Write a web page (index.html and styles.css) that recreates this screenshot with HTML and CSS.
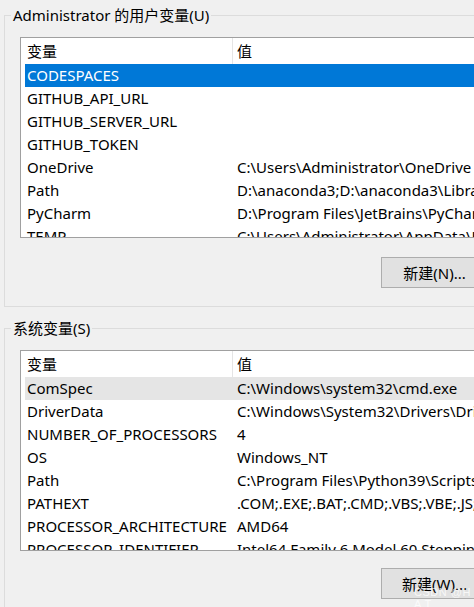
FILE: index.html
```html
<!DOCTYPE html>
<html lang="zh-CN">
<head>
    <meta charset="UTF-8">
    <meta name="viewport" content="width=device-width, initial-scale=1.0">
    <title>环境变量</title>
    <link rel="stylesheet" href="styles.css">
</head>
<body>
    <fieldset class="group" id="user_vars">
        <legend>Administrator 的用户变量(U)</legend>
        <div class="list">
            <div class="list_head">
                <div class="col_name">变量</div>
                <div class="col_value">值</div>
            </div>
            <div class="row selected"><div class="col_name">CODESPACES</div><div class="col_value"></div></div>
            <div class="row"><div class="col_name">GITHUB_API_URL</div><div class="col_value"></div></div>
            <div class="row"><div class="col_name">GITHUB_SERVER_URL</div><div class="col_value"></div></div>
            <div class="row"><div class="col_name">GITHUB_TOKEN</div><div class="col_value"></div></div>
            <div class="row"><div class="col_name">OneDrive</div><div class="col_value">C:\Users\Administrator\OneDrive</div></div>
            <div class="row"><div class="col_name">Path</div><div class="col_value">D:\anaconda3;D:\anaconda3\Library\mingw-w64\bin</div></div>
            <div class="row"><div class="col_name">PyCharm</div><div class="col_value">D:\Program Files\JetBrains\PyCharm 2021.3\bin;</div></div>
            <div class="row"><div class="col_name">TEMP</div><div class="col_value">C:\Users\Administrator\AppData\Local\Temp</div></div>
        </div>
        <div class="buttons">
            <button type="button">新建(N)...</button>
        </div>
    </fieldset>

    <fieldset class="group" id="system_vars">
        <legend>系统变量(S)</legend>
        <div class="list">
            <div class="list_head">
                <div class="col_name">变量</div>
                <div class="col_value">值</div>
            </div>
            <div class="row inactive"><div class="col_name">ComSpec</div><div class="col_value">C:\Windows\system32\cmd.exe</div></div>
            <div class="row"><div class="col_name">DriverData</div><div class="col_value">C:\Windows\System32\Drivers\DriverData</div></div>
            <div class="row"><div class="col_name">NUMBER_OF_PROCESSORS</div><div class="col_value">4</div></div>
            <div class="row"><div class="col_name">OS</div><div class="col_value">Windows_NT</div></div>
            <div class="row"><div class="col_name">Path</div><div class="col_value">C:\Program Files\Python39\Scripts\;C:\Program Files\Python39\</div></div>
            <div class="row"><div class="col_name">PATHEXT</div><div class="col_value">.COM;.EXE;.BAT;.CMD;.VBS;.VBE;.JS;.JSE;.WSF;.WSH;.MSC</div></div>
            <div class="row"><div class="col_name">PROCESSOR_ARCHITECTURE</div><div class="col_value">AMD64</div></div>
            <div class="row"><div class="col_name">PROCESSOR_IDENTIFIER</div><div class="col_value">Intel64 Family 6 Model 60 Stepping 3, GenuineIntel</div></div>
        </div>
        <div class="buttons">
            <button type="button">新建(W)...</button>
        </div>
    </fieldset>

    <div class="watermark">CSDN @H A T</div>
</body>
</html>
```

FILE: styles.css
```css
html, body {
    margin: 0;
    height: 100%;
    overflow: hidden;
}
body {
    background-color: #f0f0f0;
    color: #000;
    font-family: "Noto Sans", "Noto Sans CJK SC", sans-serif;
    font-size: 15px;
    position: relative;
}

/* グループボックス */
.group {
    width: 640px;
    margin: 5px 0 0 4px;
    padding: 12px 0 18px 15px;
    border: 1px solid #dcdcdc;
    box-sizing: border-box;
}
#system_vars {
    margin-top: 11px;
}
.group legend {
    margin-left: -9px;
    padding: 0 2px;
    height: 20px;
    line-height: 20px;
}

/* リスト */
.list {
    width: 600px;
    height: 201px;
    border: 1px solid #a0a0a0;
    background-color: #fff;
    box-sizing: border-box;
    overflow: hidden;
    white-space: nowrap;
}
.list_head {
    display: flex;
    height: 26px;
    line-height: 26px;
    font-family: "Noto Sans CJK SC", sans-serif;
}
.list_head .col_name {
    width: 205px;
    padding-left: 6px;
    border-right: 1px solid #e5e5e5;
}
.list_head .col_value {
    padding-left: 4px;
}
.row {
    display: flex;
    height: 23px;
    line-height: 23px;
    margin-left: 4px;
}
.col_name {
    width: 205px;
    padding-left: 2px;
    flex-shrink: 0;
}
.col_value {
    padding-left: 5px;
}
.row.selected {
    background-color: #0078d7;
    color: #fff;
}
.row.inactive {
    background-color: #e5e5e5;
}

/* ボタン */
.buttons {
    display: flex;
    padding-left: 361px;
    margin-top: 19px;
}
#system_vars .buttons {
    margin-top: 17px;
}
.buttons button {
    width: 107px;
    height: 31px;
    padding: 0;
    border: 1px solid #adadad;
    background-color: #e1e1e1;
    font-family: "Noto Sans", "Noto Sans CJK SC", sans-serif;
    font-size: 15px;
    color: #000;
}

.watermark {
    position: absolute;
    left: 414px;
    top: 586px;
    font-family: "Liberation Sans", sans-serif;
    font-size: 11px;
    color: rgba(255, 255, 255, 0.75);
    letter-spacing: 0.5px;
}
```
